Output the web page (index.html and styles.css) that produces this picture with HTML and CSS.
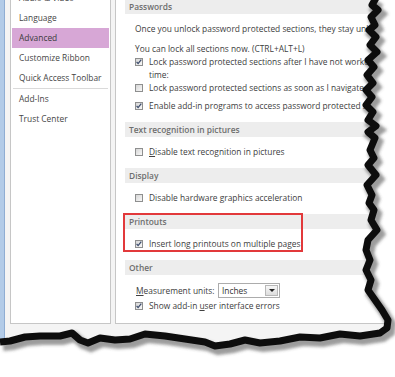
FILE: index.html
```html
<!DOCTYPE html>
<html lang="en">
<head>
<meta charset="utf-8">
<title>OneNote Options - Advanced</title>
<link rel="stylesheet" href="styles.css">
</head>
<body>
<div class="screen">
  <div class="window">
    <div class="frame-edge"></div>
    <div class="dialog">
      <nav class="nav">
        <ul class="nav-list">
          <li class="nav-item">Audio &amp; Video</li>
          <li class="nav-item">Language</li>
          <li class="nav-item active">Advanced</li>
          <li class="nav-item">Customize Ribbon</li>
          <li class="nav-item">Quick Access Toolbar</li>
          <li class="nav-sep"></li>
          <li class="nav-item">Add-Ins</li>
          <li class="nav-item">Trust Center</li>
        </ul>
      </nav>
      <main class="content">
        <section class="group">
          <h3 class="hdr">Passwords</h3>
          <div class="opts">
            <p class="note">Once you unlock password protected sections, they stay unlocked for a while.</p>
            <p class="note">You can lock all sections now. (CTRL+ALT+L)</p>
            <label class="row"><span class="cb checked"><svg viewBox="0 0 8 8"><path d="M1.6 3.9 L3.1 5.6 L6.3 1.6"/></svg></span><span>Lock password protected sections after I have not worked in them for the following amount of<br>time:</span></label>
            <label class="row"><span class="cb"></span><span>Lock password protected sections as soon as I navigate away from them</span></label>
            <label class="row spaced"><span class="cb checked"><svg viewBox="0 0 8 8"><path d="M1.6 3.9 L3.1 5.6 L6.3 1.6"/></svg></span><span>Enable add-in programs to access password protected sections when they are unlocked</span></label>
          </div>
        </section>
        <section class="group">
          <h3 class="hdr">Text recognition in pictures</h3>
          <div class="opts">
            <label class="row"><span class="cb"></span><span><u>D</u>isable text recognition in pictures</span></label>
          </div>
        </section>
        <section class="group">
          <h3 class="hdr">Display</h3>
          <div class="opts">
            <label class="row"><span class="cb"></span><span>Disable hardware <u>g</u>raphics acceleration</span></label>
          </div>
        </section>
        <section class="group">
          <h3 class="hdr">Printouts</h3>
          <div class="opts">
            <label class="row"><span class="cb checked"><svg viewBox="0 0 8 8"><path d="M1.6 3.9 L3.1 5.6 L6.3 1.6"/></svg></span><span>Insert long printouts on multiple pages</span></label>
          </div>
        </section>
        <section class="group">
          <h3 class="hdr">Other</h3>
          <div class="opts">
            <div class="measure">
              <span class="measure-label"><u>M</u>easurement units:</span>
              <span class="select"><span class="select-value">Inches</span><span class="select-btn"></span></span>
            </div>
            <label class="row tight"><span class="cb checked"><svg viewBox="0 0 8 8"><path d="M1.6 3.9 L3.1 5.6 L6.3 1.6"/></svg></span><span>Show add-in <u>u</u>ser interface errors</span></label>
          </div>
        </section>
        <div class="callout"></div>
      </main>
    </div>
  </div>
  <svg class="tear" width="395" height="377" viewBox="0 0 395 377">
    <defs>
      <filter id="soft" x="-10%" y="-10%" width="120%" height="120%">
        <feGaussianBlur stdDeviation="1.6"/>
      </filter>
    </defs>
    <polygon class="tear-paper" points="376,-2 372,5 378,10 371,17 375,25 369,30 376,37 370,45 377,52 368,60 374,67 367,75 373,83 366,90 372,97 366,105 373,112 368,120 376,126 368,132 375,138 370,150 374,158 368,165 376,175 367,185 372,195 369,203 374,210 371,220 377,230 368,240 366,250 370,260 366,270 371,280 368,290 375,300 382,310 388,320 387,328 380,333 360,336 340,334 320,338 300,337 280,341 260,343 245,340 230,344 215,346 205,342 185,339 165,336 145,334 130,339 115,340 100,338 88,343 80,340 72,333 60,336 40,336 25,337 10,341 0,342 0,377 395,377 395,-2"/>
    <polyline class="tear-shadow" filter="url(#soft)" points="376,-2 372,5 378,10 371,17 375,25 369,30 376,37 370,45 377,52 368,60 374,67 367,75 373,83 366,90 372,97 366,105 373,112 368,120 376,126 368,132 375,138 370,150 374,158 368,165 376,175 367,185 372,195 369,203 374,210 371,220 377,230 368,240 366,250 370,260 366,270 371,280 368,290 375,300 382,310 388,320 387,328 380,333 360,336 340,334 320,338 300,337 280,341 260,343 245,340 230,344 215,346 205,342 185,339 165,336 145,334 130,339 115,340 100,338 88,343 80,340 72,333 60,336 40,336 25,337 10,341 0,342"/>
    <polyline class="tear-edge" points="376,-2 372,5 378,10 371,17 375,25 369,30 376,37 370,45 377,52 368,60 374,67 367,75 373,83 366,90 372,97 366,105 373,112 368,120 376,126 368,132 375,138 370,150 374,158 368,165 376,175 367,185 372,195 369,203 374,210 371,220 377,230 368,240 366,250 370,260 366,270 371,280 368,290 375,300 382,310 388,320 387,328 380,333 360,336 340,334 320,338 300,337 280,341 260,343 245,340 230,344 215,346 205,342 185,339 165,336 145,334 130,339 115,340 100,338 88,343 80,340 72,333 60,336 40,336 25,337 10,341 0,342"/>
  </svg>
</div>
</body>
</html>
```

FILE: styles.css
```css
* {
  box-sizing: border-box;
  margin: 0;
  padding: 0;
}

html,
body {
  width: 395px;
  height: 377px;
  overflow: hidden;
  background: #ffffff;
}

body {
  font-family: "Open Sans", "Noto Sans", sans-serif;
  font-size: 8.4px;
  color: #404040;
}

.screen {
  position: relative;
  width: 395px;
  height: 377px;
  overflow: hidden;
}

.window {
  display: flex;
  width: 395px;
  height: 346px;
}

.frame-edge {
  flex: none;
  width: 5px;
  background: #b2cbe8;
  border-right: 1px solid #8fadd3;
}

.dialog {
  flex: 1;
  display: flex;
  gap: 4px;
  padding: 0 0 22px 5px;
  background: #f4f4f4;
  min-width: 0;
}

/* left navigation */
.nav {
  flex: none;
  width: 101px;
  background: #ffffff;
  border: 1px solid #c6c6c6;
  border-top: 0;
  padding: 0 1px;
  overflow: hidden;
}

.nav-list {
  list-style: none;
  margin-top: -12px;
}

.nav-item {
  height: 20px;
  line-height: 20px;
  padding-left: 7px;
  white-space: nowrap;
  color: #454545;
}

.nav-item.active {
  background: #d7a7d6;
  color: #3a3a3a;
}

.nav-sep {
  height: 1px;
  margin: 0 1px;
  background: #dadada;
}

/* right content */
.content {
  flex: 1;
  position: relative;
  min-width: 0;
  background: #ffffff;
  border-left: 1px solid #c6c6c6;
  border-bottom: 1px solid #c6c6c6;
  overflow: hidden;
}

.group:first-child {
  margin-top: -1px;
}

.group + .group {
  margin-top: 10px;
}

.hdr {
  margin-left: 9px;
  height: 15px;
  line-height: 15px;
  padding-left: 4px;
  background: #ededed;
  color: #6e6e6e;
  font-size: inherit;
  font-weight: 600;
  white-space: nowrap;
}

.opts {
  display: flex;
  flex-direction: column;
  padding: 8px 0 0 19px;
}

.note {
  line-height: 13px;
  white-space: nowrap;
}

.note + .note {
  margin-top: 7px;
}

.row {
  display: flex;
  align-items: flex-start;
  gap: 6px;
  line-height: 13px;
  white-space: nowrap;
}

.row.spaced {
  margin-top: 5px;
}

.row.tight {
  margin-top: 1px;
}

.cb {
  flex: none;
  width: 8px;
  height: 8px;
  margin-top: 2.5px;
  border: 1px solid #8e8f8f;
  background: linear-gradient(135deg, #d6d6d6, #f8f8f8);
  position: relative;
}

.cb svg {
  position: absolute;
  left: -1px;
  top: -1px;
  width: 8px;
  height: 8px;
}

.cb svg path {
  fill: none;
  stroke: #3d4d6d;
  stroke-width: 1.3;
}

u {
  text-decoration: underline;
  text-underline-offset: 1px;
}

.measure {
  display: flex;
  align-items: center;
  height: 15px;
  white-space: nowrap;
}

.measure-label {
  width: 83px;
  padding-left: 1px;
}

.select {
  display: flex;
  width: 62px;
  height: 15px;
  border: 1px solid #acacac;
  background: #ffffff;
}

.select-value {
  flex: 1;
  padding-left: 3px;
  line-height: 13px;
  color: #333333;
}

.select-btn {
  flex: none;
  width: 13px;
  margin: 1px;
  border: 1px solid #b8b8b8;
  background: linear-gradient(#f7f7f7, #dddddd);
  display: flex;
  align-items: center;
  justify-content: center;
}

.select-btn::after {
  content: "";
  border-left: 3px solid transparent;
  border-right: 3px solid transparent;
  border-top: 3px solid #222222;
}

/* annotation box */
.callout {
  position: absolute;
  left: 7px;
  top: 213px;
  width: 180px;
  height: 39px;
  border: 2px solid #e2393b;
}

/* torn paper edge */
.tear {
  position: absolute;
  left: 0;
  top: 0;
}

.tear-paper {
  fill: #ffffff;
}

.tear-shadow {
  fill: none;
  stroke: #4a4a4a;
  stroke-width: 10;
  stroke-opacity: 0.55;
  transform: translate(3px, 4px);
}

.tear-edge {
  fill: none;
  stroke: #0d0d0d;
  stroke-width: 7;
  stroke-linejoin: round;
}
```
